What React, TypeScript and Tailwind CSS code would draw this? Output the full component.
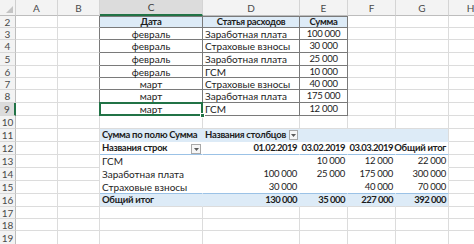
import React from "react";

type Align = "l" | "c" | "r";

type Spec = {
  text?: string;
  align?: Align;
  bold?: boolean;
  bg?: string;
  right?: string;
  bottom?: string;
  top?: boolean;
  drop?: "col" | "row";
  active?: boolean;
};

const COLS = ["A", "B", "C", "D", "E", "F", "G", "H"];
const ROWS = Array.from({ length: 18 }, (_, i) => i + 2);

// Source table C2:E9
const SOURCE: Record<number, [string, string, string]> = {
  2: ["Дата", "Статья расходов", "Сумма"],
  3: ["февраль", "Заработная плата", "100 000"],
  4: ["февраль", "Страховые взносы", "30 000"],
  5: ["февраль", "Заработная плата", "25 000"],
  6: ["февраль", "ГСМ", "10 000"],
  7: ["март", "Страховые взносы", "40 000"],
  8: ["март", "Заработная плата", "175 000"],
  9: ["март", "ГСМ", "12 000"],
};

// Pivot table rows C12:G16
const PIVOT: Record<number, string[]> = {
  12: ["Названия строк", "01.02.2019", "03.02.2019", "03.03.2019", "Общий итог"],
  13: ["ГСМ", "", "10 000", "12 000", "22 000"],
  14: ["Заработная плата", "100 000", "25 000", "175 000", "300 000"],
  15: ["Страховые взносы", "30 000", "", "40 000", "70 000"],
  16: ["Общий итог", "130 000", "35 000", "227 000", "392 000"],
};

function specFor(row: number, col: string): Spec {
  const s: Spec = { right: "grid", bottom: "grid" };
  const ci = COLS.indexOf(col);

  // source table with full borders
  if (row >= 2 && row <= 9) {
    if (col === "B") s.right = "table";
    if (ci >= 2 && ci <= 4) {
      s.text = SOURCE[row][ci - 2];
      s.right = "table";
      s.bottom = "table";
      s.align = col === "D" && row > 2 ? "l" : "c";
      if (row === 2) {
        s.bold = true;
        s.bg = "blue";
        s.top = true;
      }
      if (row === 9 && col === "C") s.active = true;
    }
  }

  // pivot table C11:G16
  if (row >= 11 && row <= 16 && ci >= 2 && ci <= 6) {
    s.right = col === "G" ? "grid" : "none";
    if (row === 11) {
      s.bg = "blue";
      s.bottom = "blue";
      s.bold = true;
      s.align = "l";
      if (col === "C") s.text = "Сумма по полю Сумма";
      if (col === "D") {
        s.text = "Названия столбцов";
        s.drop = "col";
      }
    } else {
      s.text = PIVOT[row][ci - 2];
      s.align = col === "C" ? "l" : "r";
      if (row === 12) {
        s.bold = true;
        s.bottom = "line";
        if (col === "C") s.drop = "row";
      } else if (row === 15) {
        s.bottom = "line";
      } else if (row === 16) {
        s.bold = true;
        s.bg = "blue";
      } else {
        s.bottom = "none";
      }
    }
  }
  return s;
}

function Caret() {
  return (
    <svg width="5" height="3" viewBox="0 0 5 3">
      <path d="M0 0 L5 0 L2.5 3 Z" fill="#5a5a5a" />
    </svg>
  );
}

function Cell({ row, col }: { row: number; col: string }) {
  const s = specFor(row, col);
  const rightCls =
    s.right === "table"
      ? "border-r-[#7a7a7a]"
      : s.right === "none"
      ? "border-r-transparent"
      : "border-r-[#dcdcdc]";
  const bottomCls =
    s.bottom === "table"
      ? "border-b-[#7a7a7a]"
      : s.bottom === "blue"
      ? "border-b-[#ddebf7]"
      : s.bottom === "line"
      ? "border-b-[#9bc2e6]"
      : s.bottom === "none"
      ? "border-b-transparent"
      : "border-b-[#dcdcdc]";
  const bgCls = s.bg === "blue" ? "bg-[#ddebf7]" : "bg-white";
  const alignCls =
    s.align === "c" ? "justify-center" : s.align === "r" ? "justify-end" : "justify-start";
  const numeric = !!s.text && /^[\d .]+$/.test(s.text);
  const textCls = numeric
    ? s.bold
      ? "text-[9.5px] font-bold tracking-[-0.5px]"
      : "text-[9.5px] font-normal tracking-[-0.3px]"
    : s.bold
    ? "text-[9.5px] font-bold tracking-[-0.3px]"
    : "text-[10px] font-normal tracking-[0px]";

  return (
    <div
      className={`relative flex items-center border-r border-b px-[2px] ${rightCls} ${bottomCls} ${bgCls} ${alignCls} ${
        s.top ? "border-t border-t-[#7a7a7a]" : ""
      }`}
    >
      {s.text ? (
        <span className={`relative z-10 whitespace-nowrap leading-none text-[#1c1c1c] ${textCls}`}>
          {s.text}
        </span>
      ) : null}
      {s.drop === "col" && (
        <span className="absolute right-[1px] top-[1px] z-20 flex h-[10px] w-[9px] items-center justify-center border border-[#a9a9a9] bg-[#f6f6f6]">
          <Caret />
        </span>
      )}
      {s.drop === "row" && (
        <span className="absolute right-[1px] top-[2px] z-20 flex h-[10px] w-[10px] items-center justify-center border border-[#a9a9a9] bg-[#f6f6f6]">
          <Caret />
        </span>
      )}
      {s.active && (
        <>
          <span className="pointer-events-none absolute -left-px -top-px bottom-[-1px] right-[-1px] z-20 border-2 border-[#217346]" />
          <span className="absolute bottom-[-3px] right-[-3px] z-30 h-[5px] w-[5px] border border-white bg-[#217346]" />
        </>
      )}
    </div>
  );
}

export default function App() {
  return (
    <div
      className="h-[244px] w-[474px] overflow-hidden bg-white"
      style={{ fontFamily: "Lato, 'Open Sans', 'Noto Sans', sans-serif" }}
    >
      <div className="grid w-[493px] grid-cols-[16px_42px_42px_103px_97px_48px_48px_53px_44px] grid-rows-[16px_12px_12px_13px_13px_12px_12px_13px_13px_13px_13px_13px_13px_13px_13px_13px_12px_12px_14px]">
        {/* select-all corner */}
        <div className="relative border-r border-b border-r-[#cfcfcf] border-b-[#bdbdbd] bg-[#f3f3f3]">
          <svg className="absolute bottom-[2px] right-[2px]" width="7" height="7" viewBox="0 0 7 7">
            <path d="M7 0 L7 7 L0 7 Z" fill="#c4c4c4" />
          </svg>
        </div>
        {COLS.map((c) => (
          <div
            key={c}
            className={`flex items-center justify-center border-r border-r-[#d4d4d4] text-[10px] leading-none ${
              c === "C"
                ? "border-b-2 border-b-[#217346] bg-[#dcdcdc] text-[#3d3d3d]"
                : "border-b border-b-[#bdbdbd] bg-[#f3f3f3] text-[#4a4a4a]"
            }`}
          >
            {c}
          </div>
        ))}
        {ROWS.map((r) => (
          <React.Fragment key={r}>
            <div
              className={`flex items-center justify-center border-b border-b-[#d8d8d8] text-[10px] leading-none ${
                r === 9
                  ? "border-r-2 border-r-[#217346] bg-[#dcdcdc] text-[#3d3d3d]"
                  : "border-r border-r-[#bdbdbd] bg-[#f3f3f3] text-[#4a4a4a]"
              }`}
            >
              {r}
            </div>
            {COLS.map((c) => (
              <Cell key={c} row={r} col={c} />
            ))}
          </React.Fragment>
        ))}
      </div>
    </div>
  );
}
